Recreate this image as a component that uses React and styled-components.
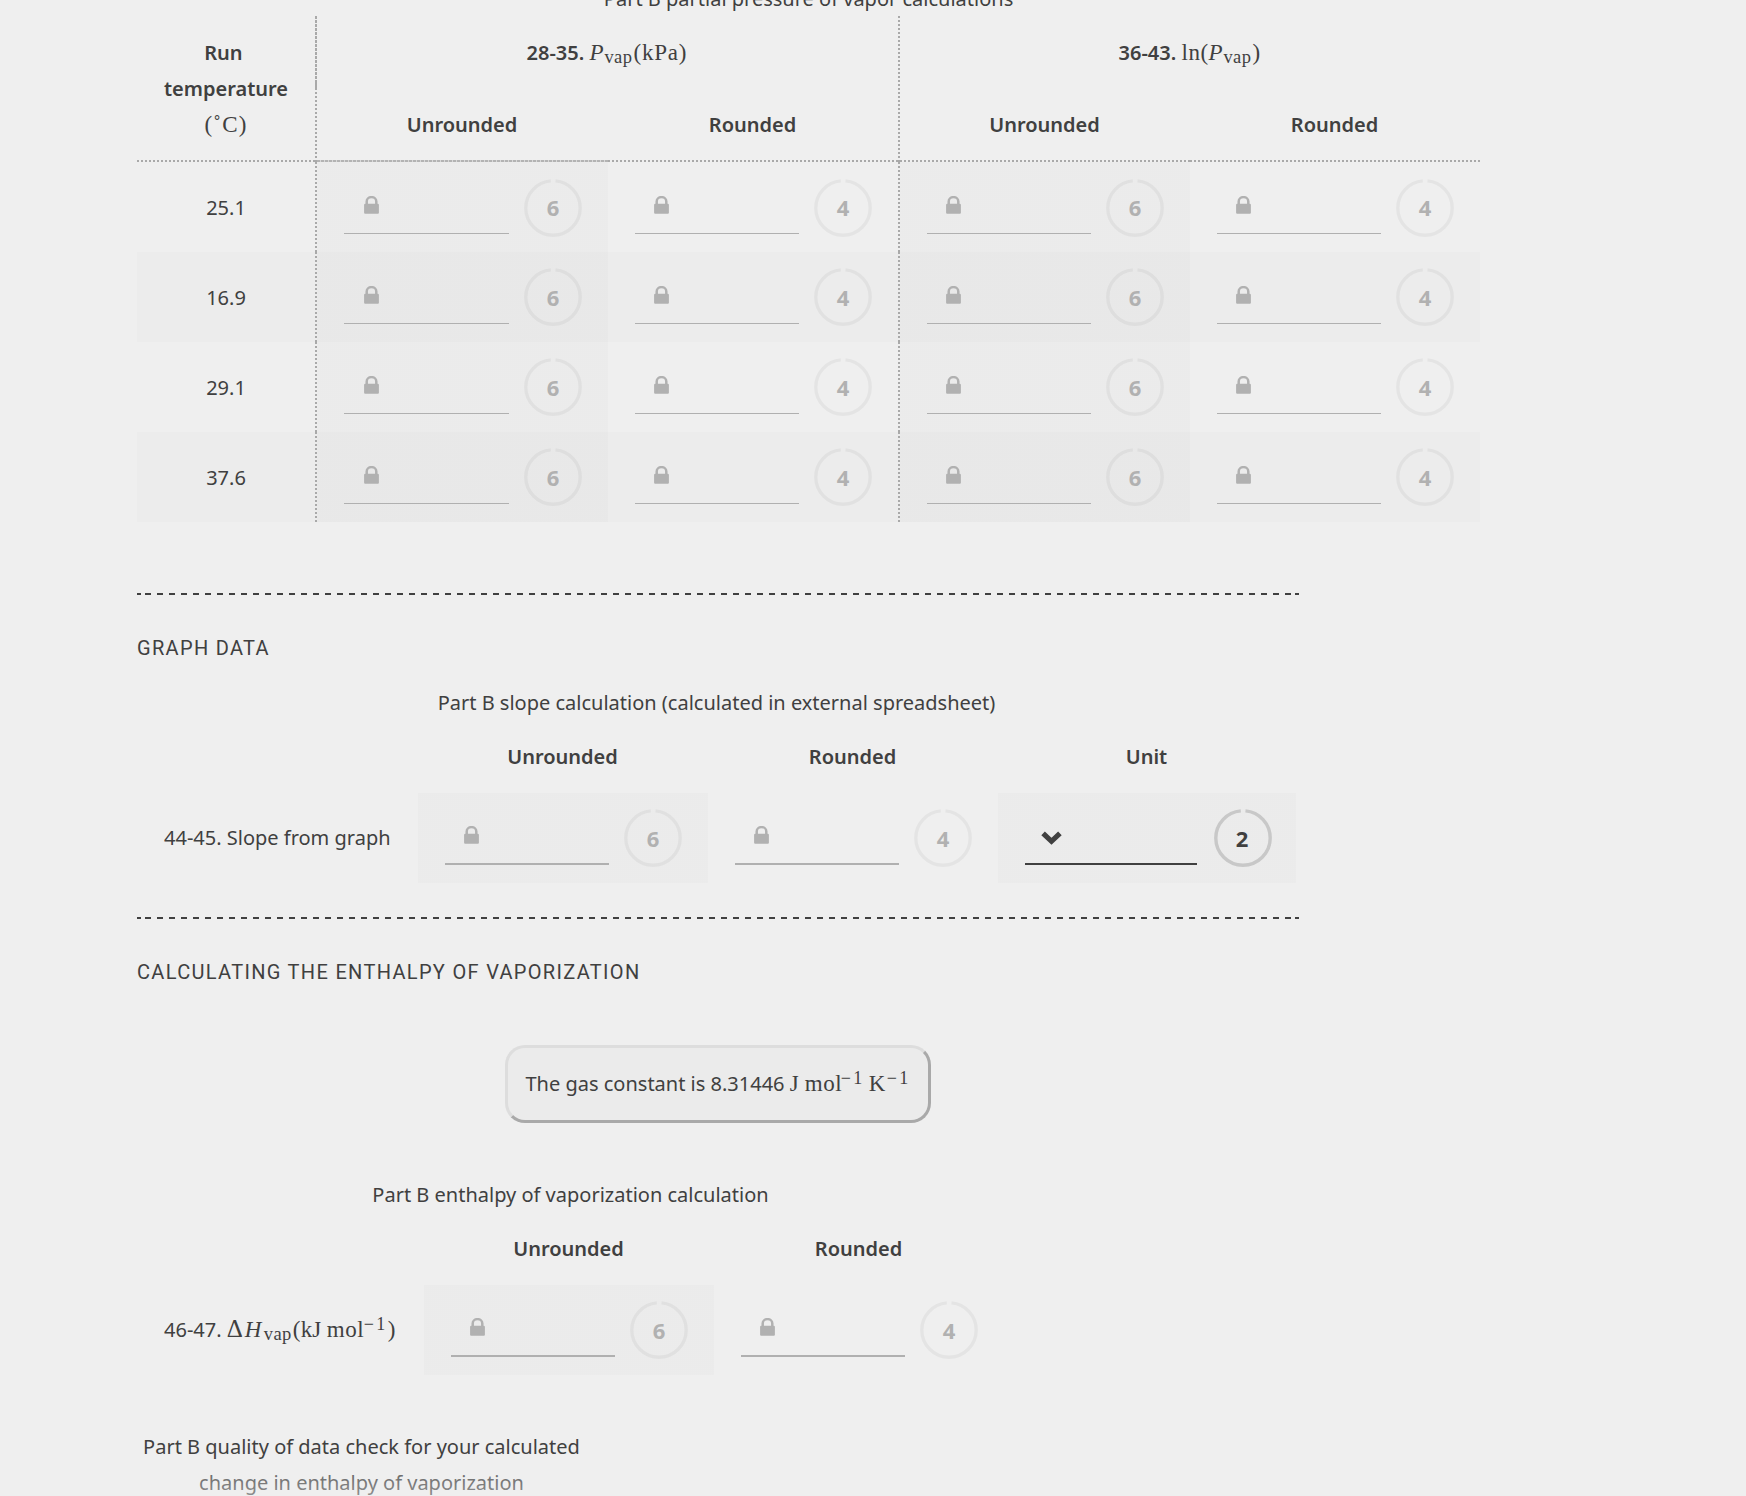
import React from "react";
import styled, { createGlobalStyle } from "styled-components";

const runs = ["25.1", "16.9", "29.1", "37.6"];

const Lock = () => (
  <svg width="15" height="18" viewBox="0 0 15 18">
    <path
      d="M2.7 8.5V5.4a4.8 4.3 0 0 1 9.6 0v3.1"
      fill="none"
      stroke="#b1b1b1"
      strokeWidth="2.5"
    />
    <rect x="0.1" y="7.8" width="14.8" height="10" rx="1.1" fill="#b1b1b1" />
  </svg>
);

const Chevron = () => (
  <svg width="21" height="14" viewBox="0 0 21 14">
    <path
      d="M2.1 2.4L10.5 10.3L18.9 2.4"
      fill="none"
      stroke="#404040"
      strokeWidth="5.2"
      strokeLinejoin="miter"
    />
  </svg>
);

// the ring is open for 5px at the top
const Ring = ({ value, active }) => (
  <RingBox $active={active}>
    <svg width="58" height="58" viewBox="0 0 58 58">
      <circle
        cx="29"
        cy="29"
        r="27.2"
        fill="none"
        stroke={active ? "#c8c8c8" : "rgba(0, 0, 0, 0.045)"}
        strokeWidth="3.4"
        strokeDasharray="165.9 5"
        strokeDashoffset="-2.5"
        transform="rotate(-90 29 29)"
      />
    </svg>
    <span>{value}</span>
  </RingBox>
);

const Field = ({ value, thin, unit, inset = 19 }) => (
  <FieldBox $unit={unit}>
    <Input $thin={thin} $active={unit} $inset={inset}>
      {unit ? <Chevron /> : <Lock />}
    </Input>
    <Ring value={value} active={unit} />
  </FieldBox>
);

const Vap = () => <Sub $w={29}>vap</Sub>;

const App = () => {
  return (
    <Page>
      <GlobalStyle />
      <RunTable $width={1343}>
        <caption>Part B partial pressure of vapor calculations</caption>
        <colgroup>
          <col width="180" />
          <col width="291" />
          <col width="292" />
          <col width="290" />
          <col width="290" />
        </colgroup>
        <thead>
          <tr>
            <Th rowSpan="2" $line $under $corner>
              Run&nbsp;
              <br />
              temperature
              <br />
              <Sym $ls={1.2}>(˚C)</Sym>
            </Th>
            <Th colSpan="2" $line>
              28-35. <Sym $w={15} $italic>P</Sym>
              <Vap />
              <Sym $w={54} $ls={0.8}>(kPa)</Sym>
            </Th>
            <Th colSpan="2">
              36-43. <Sym $w={27} $ls={0.6}>ln(</Sym>
              <Sym $w={15} $italic>P</Sym>
              <Vap />
              <Sym $w={8}>)</Sym>
            </Th>
          </tr>
          <tr>
            <Th $under $dense>Unrounded</Th>
            <Th $line $under>Rounded</Th>
            <Th $under>Unrounded</Th>
            <Th $under>Rounded</Th>
          </tr>
        </thead>
        <tbody>
          {runs.map((run) => (
            <Row key={run}>
              <Td $line $center>{run}</Td>
              <Td $shade><Field value={6} thin inset={20} /></Td>
              <Td $line><Field value={4} thin /></Td>
              <Td $shade><Field value={6} thin /></Td>
              <Td><Field value={4} thin /></Td>
            </Row>
          ))}
        </tbody>
      </RunTable>

      <Divider $top={71} />
      <Heading>Graph data</Heading>
      <Table $width={1159} $top={19}>
        <caption>Part B slope calculation (calculated in external spreadsheet)</caption>
        <colgroup>
          <col width="281" />
          <col width="290" />
          <col width="290" />
          <col width="298" />
        </colgroup>
        <thead>
          <tr>
            <Th />
            <Th>Unrounded</Th>
            <Th>Rounded</Th>
            <Th>Unit</Th>
          </tr>
        </thead>
        <tbody>
          <tr>
            <Td>44-45. Slope from graph</Td>
            <Td $shade><Field value={6} /></Td>
            <Td><Field value={4} /></Td>
            <Td $shade><Field value={2} unit inset={16} /></Td>
          </tr>
        </tbody>
      </Table>

      <Divider $top={34} />
      <Heading>Calculating the enthalpy of vaporization</Heading>
      <Note>
        The gas constant is 8.31446{" "}
        <Sym $w={15}>J</Sym>
        <Sym $w={36} $ls={0.6}>mol</Sym>
        <Sup $w={28}>−1</Sup>
        <Sym $w={18}>K</Sym>
        <Sup $w={22}>−1</Sup>
      </Note>

      <Table $width={867} $top={54}>
        <caption>Part B enthalpy of vaporization calculation</caption>
        <colgroup>
          <col width="287" />
          <col width="290" />
          <col width="290" />
        </colgroup>
        <thead>
          <tr>
            <Th />
            <Th>Unrounded</Th>
            <Th>Rounded</Th>
          </tr>
        </thead>
        <tbody>
          <tr>
            <Td>
              46-47. <Sym $w={18} $size={25}>Δ</Sym>
              <Sym $w={19} $italic>H</Sym>
              <Vap />
              <Sym $w={8}>(</Sym>
              <Sym $w={26}>kJ</Sym>
              <Sym $w={37} $ls={0.6}>mol</Sym>
              <Sup $w={24}>−1</Sup>
              <Sym $w={8}>)</Sym>
            </Td>
            <Td $shade><Field value={6} /></Td>
            <Td><Field value={4} /></Td>
          </tr>
        </tbody>
      </Table>

      <Closing>
        Part B quality of data check for your calculated
        <br />
        change in enthalpy of vaporization
      </Closing>
      <Fade />
    </Page>
  );
};

const GlobalStyle = createGlobalStyle`
  * {
    box-sizing: border-box;
  }
  body {
    margin: 0;
    background: #efefef;
    overflow: hidden;
  }
`;

const Page = styled("div")`
  position: relative;
  height: 1496px;
  padding-left: 137px;
  overflow: hidden;
  color: #404040;
  background: #efefef;
  font: 20px/36px "Noto Sans", sans-serif;
`;

const Table = styled("table")`
  width: ${({ $width }) => $width}px;
  margin-top: ${({ $top }) => $top}px;
  table-layout: fixed;
  border-collapse: separate;
  border-spacing: 0;
  caption {
    height: 36px;
    white-space: nowrap;
  }
`;

const dotsY = "repeating-linear-gradient(180deg, #a9a9a9 0 2px, transparent 2px 4px) right top / 2px 100% no-repeat";
const dotsX = "repeating-linear-gradient(90deg, #a9a9a9 0 2px, transparent 2px 4px) left bottom / 100% 2px no-repeat";
const denseX = "repeating-linear-gradient(90deg, #b3b3b3 0 3px, #d8d8d8 3px 4px) left bottom / 100% 2px no-repeat";
// overlapping dots beside the first header group
const cornerY =
  "linear-gradient(#a9a9a9, #a9a9a9) right 67px / 2px 7px no-repeat, repeating-linear-gradient(180deg, #a9a9a9 0 3px, transparent 3px 4px) right top / 2px 67px no-repeat";

const lines = ({ $line, $under, $dense, $corner, $shade }) => {
  const layers = [];
  if ($corner) layers.push(cornerY);
  if ($line) layers.push(dotsY);
  if ($under) layers.push($dense ? denseX : dotsX);
  if ($shade) layers.push("linear-gradient(rgba(0, 0, 0, 0.015), rgba(0, 0, 0, 0.015))");
  return layers.join(", ") || "none";
};

const Th = styled("th")`
  padding: 18px 0 ${({ $under }) => ($under ? 20 : 18)}px;
  padding-right: ${({ $line, $corner }) => ($line ? 2 : 0) + ($corner ? 0 : 1)}px;
  background: ${lines};
  font-weight: 600;
  text-align: center;
  vertical-align: top;
  white-space: nowrap;
`;

const Td = styled("td")`
  height: 90px;
  padding: 0 0 0 ${({ $center }) => ($center ? 0 : 27)}px;
  padding-right: ${({ $line }) => ($line ? 2 : 0)}px;
  background: ${lines};
  text-align: ${({ $center }) => ($center ? "center" : "left")};
  vertical-align: middle;
  white-space: nowrap;
`;

const Row = styled("tr")`
  &:nth-child(even) {
    background: rgba(0, 0, 0, 0.0135);
  }
`;

const FieldBox = styled("div")`
  display: flex;
  align-items: flex-end;
  gap: ${({ $unit }) => ($unit ? 17 : 15)}px;
  margin-right: ${({ $unit }) => ($unit ? 24 : 26)}px;
`;

const Input = styled("div")`
  flex: 1;
  display: flex;
  align-items: center;
  height: 54px;
  margin-bottom: 2px;
  padding: ${({ $active }) => ($active ? "2px 0 0" : "0 0 4px")};
  padding-left: ${({ $inset }) => $inset}px;
  border-bottom: ${({ $thin }) => ($thin ? 1 : 2)}px solid
    ${({ $active }) => ($active ? "#404040" : "#b0b0b0")};
`;

const RingBox = styled("div")`
  display: grid;
  flex: none;
  width: 58px;
  height: 58px;
  color: ${({ $active }) => ($active ? "#404040" : "#b1b1b1")};
  font-size: 22px;
  font-weight: 700;
  > * {
    grid-area: 1 / 1;
    place-self: center;
  }
  > span {
    padding: 0 ${({ $active }) => ($active ? 2 : 0)}px 1px 0;
  }
`;

const RunTable = styled(Table)`
  margin-top: -20px;
  caption {
    transform: translateY(1px);
  }
  thead ${Th} {
    padding-top: 19px;
    padding-bottom: 17px;
  }
  thead tr:last-child ${Th} {
    padding-bottom: 19px;
  }
  ${Td}:first-child {
    padding-top: 2px;
  }
  ${Row}:first-child ${RingBox} svg {
    transform: translateY(1px);
  }
`;

const Sym = styled("span")`
  display: inline-block;
  width: ${({ $w }) => ($w ? $w + "px" : "auto")};
  font-family: "Liberation Serif", serif;
  font-size: ${({ $size }) => $size || 23}px;
  font-style: ${({ $italic }) => ($italic ? "italic" : "normal")};
  font-weight: 400;
  line-height: 20px;
  letter-spacing: ${({ $ls }) => $ls || 0}px;
  text-align: left;
`;

const Sub = styled(Sym)`
  font-size: 18.5px;
  line-height: 10px;
  letter-spacing: 0.4px;
  vertical-align: -3px;
`;

const Sup = styled(Sym)`
  font-size: 18px;
  line-height: 10px;
  letter-spacing: 2.3px;
  vertical-align: 7px;
`;

const Divider = styled("div")`
  width: 1162px;
  height: 2px;
  margin-top: ${({ $top }) => $top}px;
  background:
    linear-gradient(#404040, #404040) left top / 4px 2px no-repeat,
    linear-gradient(#404040, #404040) right top / 4px 2px no-repeat,
    repeating-linear-gradient(90deg, #404040 0 6px, transparent 6px 12px) 8px 0 / 1146px 2px no-repeat;
`;

const Heading = styled("h3")`
  margin: 35px 0 0;
  font: 400 20px/36px Roboto, sans-serif;
  letter-spacing: 1.32px;
  text-transform: uppercase;
`;

const Note = styled("div")`
  width: 426px;
  height: 78px;
  margin: 55px 0 0 368px;
  padding: 18px 0 0 17.5px;
  border: 3px solid;
  border-color: #dddddd #a9a9a9 #a9a9a9 #dddddd;
  border-radius: 20px;
  background: #ebebeb;
  white-space: nowrap;
`;

const Closing = styled("div")`
  width: 449px;
  margin-top: 54px;
  text-align: center;
`;

const Fade = styled("div")`
  position: absolute;
  inset: auto 0 0;
  height: 34px;
  background: linear-gradient(rgba(239, 239, 239, 0.15), rgba(239, 239, 239, 0.45));
`;

export default App;
